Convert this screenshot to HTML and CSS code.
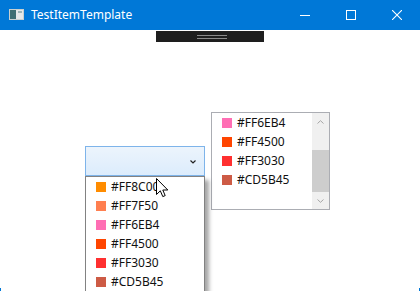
FILE: index.html
```html
<!DOCTYPE html>
<html>
<head>
<meta charset="utf-8">
<link rel="stylesheet" href="styles.css">
</head>
<body>
<div class="window">
  <header class="titlebar">
    <svg class="app-icon" width="15" height="11" viewBox="0 0 15 11">
      <rect x="0.5" y="0.5" width="14" height="10" fill="#e6e9e9" stroke="#c8d0d0"/>
      <rect x="1" y="1" width="6" height="9" fill="#3f6f73"/>
      <rect x="9" y="2" width="4" height="2" fill="#9fb6b8"/>
    </svg>
    <span class="title">TestItemTemplate</span>
    <div class="caption-buttons">
      <div class="cap-btn">
        <svg width="10" height="10" viewBox="0 0 10 10"><path d="M0 5.5H10" stroke="#fff" stroke-width="1"/></svg>
      </div>
      <div class="cap-btn">
        <svg width="10" height="10" viewBox="0 0 10 10"><rect x="0.5" y="0.5" width="9" height="9" fill="none" stroke="#fff" stroke-width="1"/></svg>
      </div>
      <div class="cap-btn">
        <svg width="10" height="10" viewBox="0 0 10 10"><path d="M0 0L10 10M10 0L0 10" stroke="#fff" stroke-width="1.1"/></svg>
      </div>
    </div>
  </header>
  <main class="client">
    <div class="devbar"><span class="grip"></span></div>
    <div class="stage">
      <div class="combo-wrap">
        <div class="combo">
          <svg class="chev" width="6" height="4" viewBox="0 0 6 4"><path d="M0.5 0.5L3 3L5.5 0.5" fill="none" stroke="#222" stroke-width="1.2"/></svg>
        </div>
        <div class="popup">
          <div class="item"><span class="sw" style="background:#FF8C00"></span>#FF8C00</div>
          <div class="item"><span class="sw" style="background:#FF7F50"></span>#FF7F50</div>
          <div class="item"><span class="sw" style="background:#FF6EB4"></span>#FF6EB4</div>
          <div class="item"><span class="sw" style="background:#FF4500"></span>#FF4500</div>
          <div class="item"><span class="sw" style="background:#FF3030"></span>#FF3030</div>
          <div class="item"><span class="sw" style="background:#CD5B45"></span>#CD5B45</div>
        </div>
      </div>
      <div class="listbox">
        <div class="list-items">
          <div class="item"><span class="sw" style="background:#FF6EB4"></span>#FF6EB4</div>
          <div class="item"><span class="sw" style="background:#FF4500"></span>#FF4500</div>
          <div class="item"><span class="sw" style="background:#FF3030"></span>#FF3030</div>
          <div class="item"><span class="sw" style="background:#CD5B45"></span>#CD5B45</div>
        </div>
        <div class="scrollbar">
          <div class="sb-btn">
            <svg width="7" height="4" viewBox="0 0 7 4"><path d="M0.5 3.5L3.5 0.7L6.5 3.5" fill="none" stroke="#a6a6a6" stroke-width="1"/></svg>
          </div>
          <div class="sb-track"><div class="sb-thumb"></div></div>
          <div class="sb-btn">
            <svg width="7" height="4" viewBox="0 0 7 4"><path d="M0.5 0.5L3.5 3.3L6.5 0.5" fill="none" stroke="#a6a6a6" stroke-width="1"/></svg>
          </div>
        </div>
      </div>
    </div>
    <svg class="cursor" width="13" height="20" viewBox="0 0 13 20">
      <path d="M0.5 0.5L0.5 16.5L4.3 12.8L6.8 18.6L9.2 17.6L6.8 12L11.8 12Z" fill="#fff" stroke="#000" stroke-width="1" stroke-linejoin="miter"/>
    </svg>
  </main>
</div>
</body>
</html>
```

FILE: styles.css
```css
html, body {
  margin: 0;
  padding: 0;
}
body {
  width: 420px;
  height: 291px;
  overflow: hidden;
  background: #fff;
  font-family: "Noto Sans", "Liberation Sans", sans-serif;
}
.window {
  width: 420px;
  height: 291px;
  display: flex;
  flex-direction: column;
  position: relative;
  overflow: hidden;
}
.window::before,
.window::after {
  content: "";
  position: absolute;
  bottom: 0;
  width: 1px;
  height: 3px;
  background: #0078d7;
}
.window::before { left: 0; }
.window::after { right: 0; }
.titlebar {
  height: 30px;
  flex: none;
  background: #0078d7;
  display: flex;
  align-items: center;
  color: #fff;
}
.app-icon {
  margin-left: 9px;
  margin-right: 7px;
  margin-top: -1px;
}
.title {
  font-size: 12px;
  line-height: 16px;
  flex: 1;
}
.caption-buttons {
  display: flex;
  height: 30px;
}
.cap-btn {
  width: 46px;
  height: 30px;
  display: flex;
  align-items: center;
  justify-content: center;
}
.cap-btn svg { display: block; }
.client {
  flex: 1;
  position: relative;
}
.devbar {
  width: 108px;
  height: 11px;
  margin: 1px auto 0;
  background: #1e1e1e;
  display: flex;
  align-items: center;
  justify-content: center;
}
.grip {
  width: 30px;
  height: 2px;
  border-top: 1px solid #8a8a8a;
  border-bottom: 1px solid #8a8a8a;
  margin-left: 3px;
}
.stage {
  display: flex;
  align-items: flex-start;
  gap: 6px;
  padding-left: 85px;
  margin-top: 70px;
}
.combo-wrap {
  position: relative;
  width: 120px;
  margin-top: 34px;
}
.combo {
  box-sizing: border-box;
  height: 30px;
  border: 1px solid #7eb4ea;
  background: linear-gradient(#ecf4fc, #dcecfc);
  display: flex;
  align-items: center;
  justify-content: flex-end;
  padding-right: 8px;
}
.chev { display: block; margin-top: 1px; }
.popup {
  position: absolute;
  top: 30px;
  left: 0;
  width: 120px;
  box-sizing: border-box;
  border: 1px solid #828282;
  background: #fff;
  box-shadow: 4px 4px 4px rgba(0, 0, 0, 0.35);
}
.item {
  height: 19px;
  display: flex;
  align-items: center;
  padding-left: 10px;
  font-size: 12px;
  color: #111;
  white-space: nowrap;
}
.sw {
  width: 10px;
  height: 10px;
  margin-right: 5px;
  flex: none;
}
.listbox {
  box-sizing: border-box;
  width: 119px;
  height: 98px;
  border: 1px solid #abadb3;
  background: #fff;
  display: flex;
}
.list-items {
  flex: 1;
}
.scrollbar {
  width: 17px;
  background: #f0f0f0;
  display: flex;
  flex-direction: column;
}
.sb-btn {
  height: 17px;
  display: flex;
  align-items: center;
  justify-content: center;
}
.sb-btn svg { display: block; }
.sb-track {
  flex: 1;
  display: flex;
  flex-direction: column;
  justify-content: flex-end;
}
.sb-thumb {
  height: 42px;
  background: #cdcdcd;
}
.cursor {
  position: absolute;
  left: 156px;
  top: 148px;
}
```
